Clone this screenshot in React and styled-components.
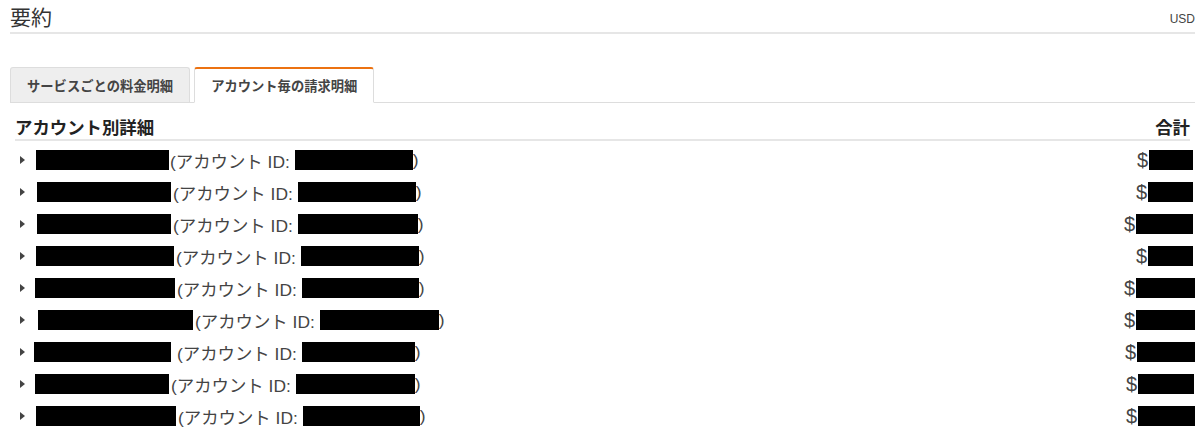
import React from "react"
import styled, { createGlobalStyle } from "styled-components"

const GlobalStyle = createGlobalStyle`
  body {
    margin: 0;
    background: #fff;
    font-family: "Liberation Sans", Arial, "Noto Sans CJK JP", sans-serif;
    color: #333;
  }
`

const Page = styled.div`
  width: 1200px;
  height: 441px;
  box-sizing: border-box;
  padding: 4px 5px 0 10px;
  overflow: hidden;
`

const SummaryHeader = styled.div`
  display: flex;
  justify-content: space-between;
  align-items: center;
  height: 28px;
  border-bottom: 2px solid #e6e6e6;
`

const Title = styled.h2`
  margin: 0;
  font-size: 21px;
  font-weight: normal;
  color: #333;
  line-height: 28px;
`

const Currency = styled.span`
  font-size: 12px;
  color: #444;
  margin-top: 2px;
`

const TabBar = styled.div`
  display: flex;
  align-items: flex-end;
  gap: 4px;
  margin-top: 33px;
  border-bottom: 1px solid #ddd;
`

const Tab = styled.div`
  box-sizing: border-box;
  height: ${p => (p.$active ? "36px" : "35px")};
  padding: 0 16px;
  display: flex;
  align-items: center;
  font-size: 13.3px;
  font-weight: bold;
  color: #444;
  background: ${p => (p.$active ? "#fff" : "#eee")};
  border: 1px solid #ddd;
  border-top: ${p => (p.$active ? "2px solid #ec7211" : "1px solid #ddd")};
  border-bottom: ${p => (p.$active ? "1px solid #fff" : "none")};
  border-radius: 3px 3px 0 0;
  margin-bottom: ${p => (p.$active ? "-1px" : "0")};
`

const Table = styled.div`
  margin: 10px 5px 0 5px;
`

const TableHead = styled.div`
  display: flex;
  justify-content: space-between;
  align-items: center;
  height: 26px;
  font-size: 17.4px;
  font-weight: bold;
  color: #222;
  border-bottom: 2px solid #e6e6e6;
`

const Rows = styled.div`
  padding-top: 3px;
  margin-right: -5px;
`

const Row = styled.div`
  display: flex;
  align-items: center;
  height: 32px;
  font-size: 17.4px;
  color: #444;
`

const Caret = styled.span`
  width: 0;
  height: 0;
  margin-left: 5px;
  border-top: 4px solid transparent;
  border-bottom: 4px solid transparent;
  border-left: 5px solid #444;
`

const Redacted = styled.span`
  display: inline-block;
  width: ${p => p.$w}px;
  height: 20px;
  margin-left: ${p => p.$ml || 0}px;
  margin-right: ${p => p.$mr || 0}px;
  background: #000;
`

const Label = styled.span`
  white-space: pre;
`

const Amount = styled.span`
  margin-left: auto;
  display: flex;
  align-items: center;
  font-size: 20px;
  color: #444;
`

const accounts = [
  { ml: 11, name: 133, gap: 1, id: 118, amount: 44, mr: 2 },
  { ml: 12, name: 134, gap: 2, id: 118, amount: 45, mr: 2 },
  { ml: 12, name: 134, gap: 2, id: 120, amount: 57, mr: 2 },
  { ml: 11, name: 138, gap: 2, id: 118, amount: 45, mr: 2 },
  { ml: 10, name: 140, gap: 2, id: 117, amount: 59, mr: 0 },
  { ml: 13, name: 155, gap: 2, id: 119, amount: 59, mr: 0 },
  { ml: 9, name: 137, gap: 6, id: 113, amount: 58, mr: 0 },
  { ml: 10, name: 134, gap: 2, id: 119, amount: 56, mr: 1 },
  { ml: 11, name: 140, gap: 2, id: 117, amount: 57, mr: 0 },
]

export default function App() {
  return (
    <Page>
      <GlobalStyle />
      <SummaryHeader>
        <Title>要約</Title>
        <Currency>USD</Currency>
      </SummaryHeader>
      <TabBar>
        <Tab>サービスごとの料金明細</Tab>
        <Tab $active>アカウント毎の請求明細</Tab>
      </TabBar>
      <Table>
        <TableHead>
          <span>アカウント別詳細</span>
          <span>合計</span>
        </TableHead>
        <Rows>
          {accounts.map((a, i) => (
            <Row key={i}>
              <Caret />
              <Redacted $w={a.name} $ml={a.ml} $mr={a.gap} />
              <Label>(アカウント ID: </Label>
              <Redacted $w={a.id} />
              <Label>)</Label>
              <Amount>
                $<Redacted $w={a.amount} $ml={1} $mr={a.mr} />
              </Amount>
            </Row>
          ))}
        </Rows>
      </Table>
    </Page>
  )
}
